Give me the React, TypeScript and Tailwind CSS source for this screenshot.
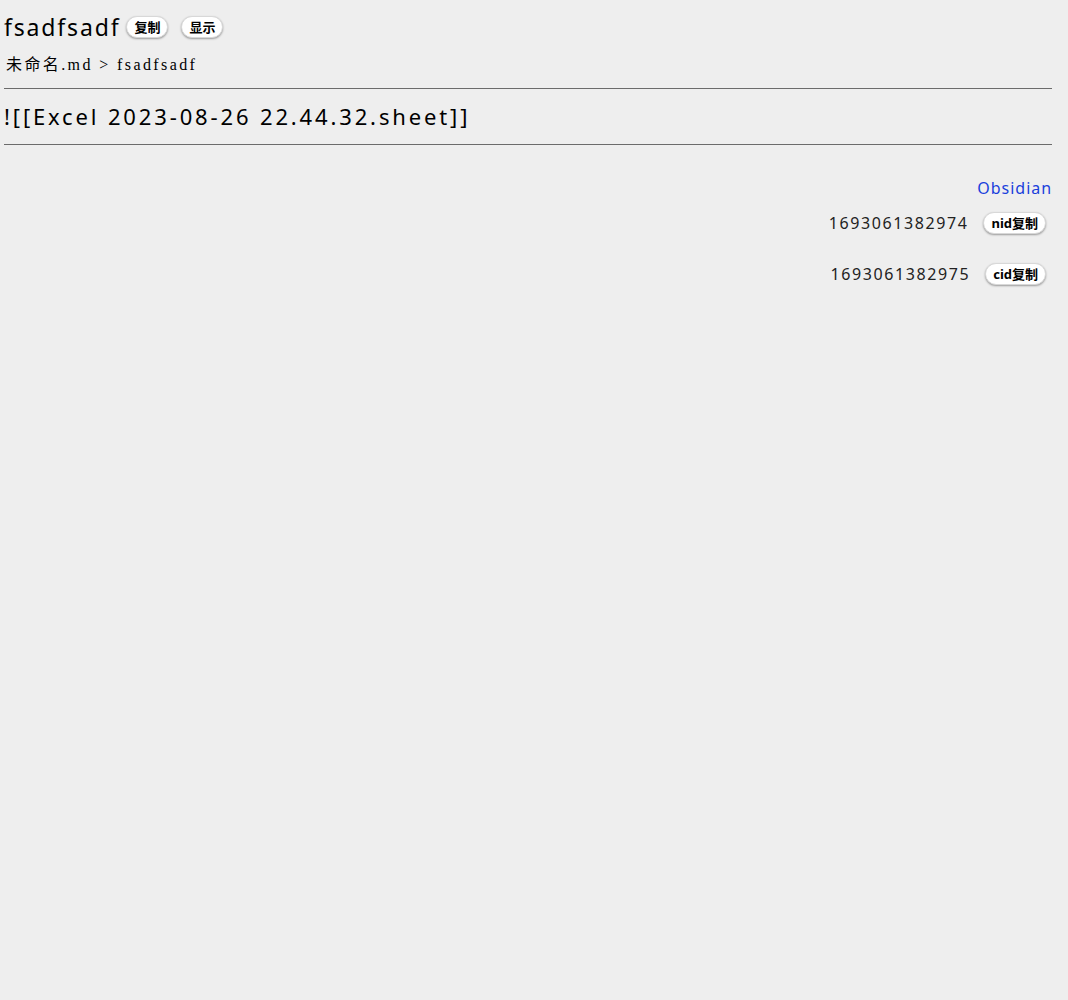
import React from "react";

const Pill = ({ children }: { children: React.ReactNode }) => (
  <button className="rounded-full bg-white px-[7px] h-[22px] text-[13px] font-bold leading-none text-black shadow-[0_1px_2px_rgba(0,0,0,0.35)] border border-[#d8d8d8]">
    {children}
  </button>
);

export default function App() {
  return (
    <div className="min-h-[1000px] w-full bg-[#eeeeee] font-['Noto_Sans','Noto_Sans_CJK_SC',sans-serif] text-black">
      <div className="pl-[4px] pr-[16px]">
        <div className="flex items-center h-[52px] pt-[2px]">
          <span className="text-[23px] tracking-[0.08em] mr-[6px]">fsadfsadf</span>
          <Pill>复制</Pill>
          <span className="w-[13px]" />
          <Pill>显示</Pill>
        </div>
        <div className="text-[16px] font-['Liberation_Serif','Noto_Sans_CJK_SC',serif] tracking-[0.15em] pl-[2px] h-[27px] leading-[26px]">
          未命名.md &gt; fsadfsadf
        </div>
        <hr className="mt-[9px] border-0 border-t border-[#6b6b6b]" />
        <div className="h-[55px] flex items-center text-[22px] tracking-[0.13em]">
          ![[Excel 2023-08-26 22.44.32.sheet]]
        </div>
        <hr className="border-0 border-t border-[#6b6b6b]" />
        <div className="flex flex-col items-end mt-[32px]">
          <div className="text-[16px] text-[#1a3fdc] tracking-[0.06em] h-[22px] leading-[22px]">Obsidian</div>
          <div className="flex items-center mt-[12px] pr-[6px] gap-[15px]">
            <span className="text-[16px] text-[#222] tracking-[0.1em]">1693061382974</span>
            <Pill>nid复制</Pill>
          </div>
          <div className="flex items-center mt-[27px] pr-[6px] gap-[15px]">
            <span className="text-[16px] text-[#222] tracking-[0.1em]">1693061382975</span>
            <Pill>cid复制</Pill>
          </div>
        </div>
      </div>
    </div>
  );
}
